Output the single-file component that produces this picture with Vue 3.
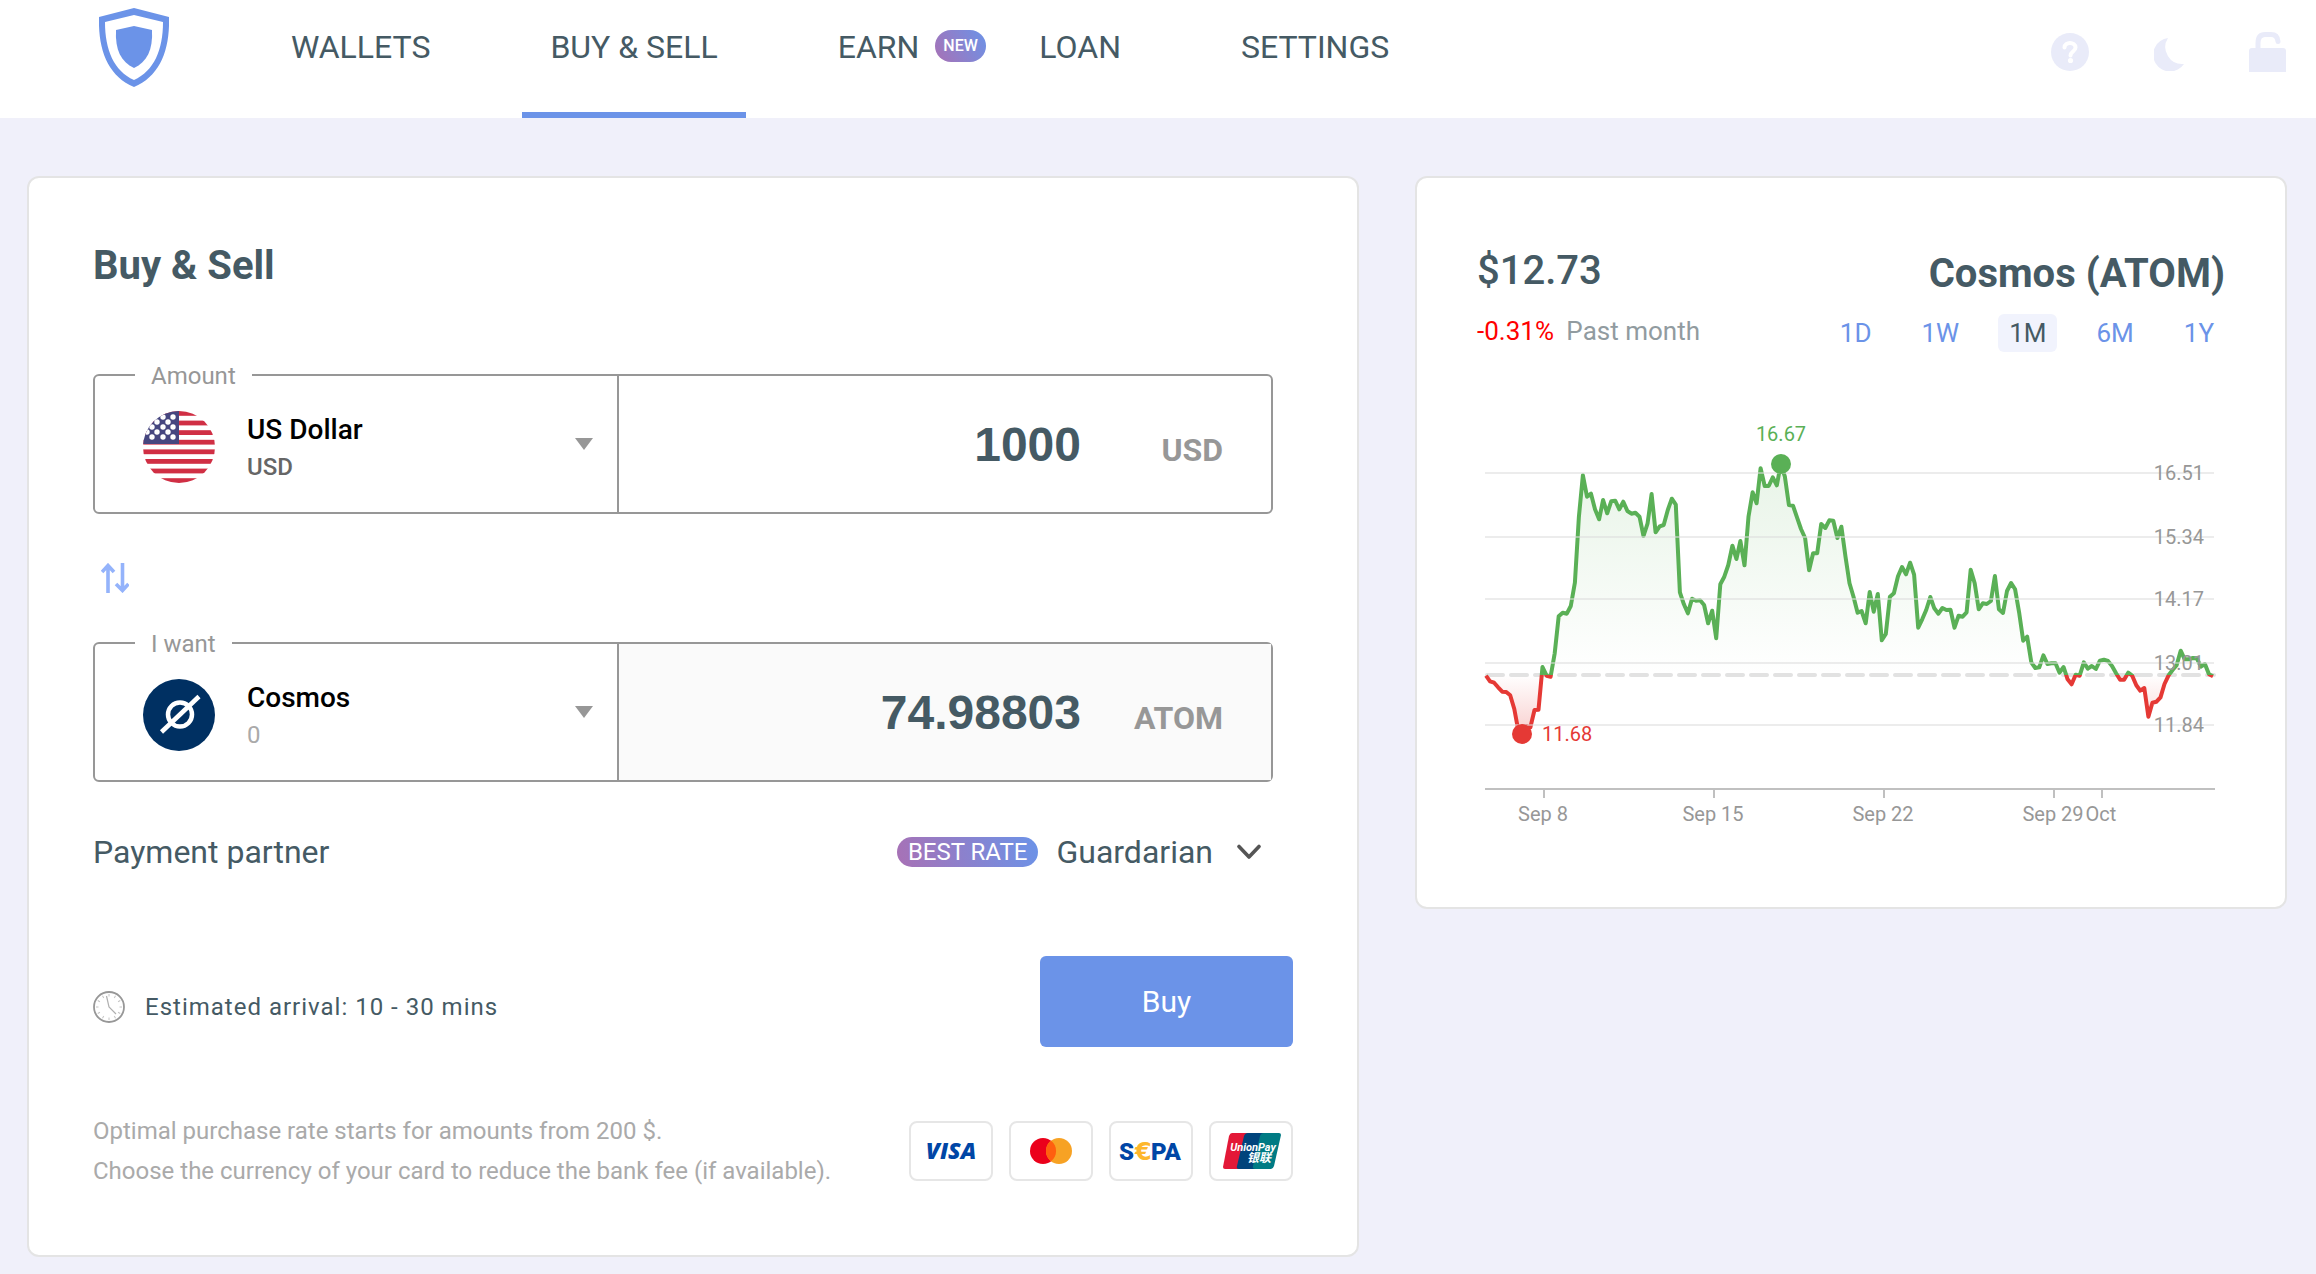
<template>
  <div class="page">
    <header class="topbar">
      <a class="logo" href="#" aria-label="Home">
        <svg width="70" height="79" viewBox="0 0 70 79">
          <path
            fill="#6b93e8"
            fill-rule="evenodd"
            d="M35 0 L70 9 C71 42 61 68 35 79 C9 68 -1 42 0 9 Z M35 7 L6 14 C6 42 15 63 35 72 C55 63 64 42 64 14 Z"
          />
          <path fill="#6b93e8" d="M35 18 L53 22 C54 42 48 54 35 60 C22 54 16 42 17 22 Z" />
        </svg>
      </a>
      <nav class="nav">
        <a
          v-for="item in menu"
          :key="item.label"
          href="#"
          class="nav-item"
          :class="{ active: item.active }"
        >
          {{ item.label }}
          <span v-if="item.badge" class="nav-badge">{{ item.badge }}</span>
        </a>
      </nav>
      <div class="tools">
        <button aria-label="Help">
          <svg width="38" height="38" viewBox="0 0 38 38">
            <circle cx="19" cy="19" r="19" fill="#e9ebf9" />
            <path
              d="M13.5 14.5 C13.5 8.500 24.500 8.500 24.500 14.500 C24.500 18.500 19.500 18.500 19.500 22.500"
              fill="none"
              stroke="#fff"
              stroke-width="4"
              stroke-linecap="round"
            />
            <circle cx="19.500" cy="27.500" r="2.600" fill="#fff" />
          </svg>
        </button>
        <button aria-label="Dark mode">
          <svg width="30" height="38" viewBox="0 0 30 38">
            <path
              fill="#e9ebf9"
              d="M14 5 A17 17 0 0 0 30 31 A16.800 16.800 0 1 1 14 5 Z"
            />
          </svg>
        </button>
        <button aria-label="Lock">
          <svg width="37" height="40" viewBox="0 0 37 40">
            <path
              d="M9 20 V11 Q9 2.500 16 2.500 H22 Q28.500 2.500 29 9.500"
              fill="none"
              stroke="#e9ebf9"
              stroke-width="5"
              stroke-linecap="round"
            />
            <path fill="#e9ebf9" d="M0 19 Q0 16 3 16 H34 Q37 16 37 19 V40 H0 Z" />
          </svg>
        </button>
      </div>
    </header>

    <main class="content">
      <section class="card trade">
        <h1>Buy &amp; Sell</h1>

        <div class="field">
          <label for="amount">Amount</label>
          <button class="picker">
            <svg class="coin" width="72" height="72" viewBox="0 0 72 72">
              <clipPath id="flag-clip"><circle cx="36" cy="36" r="36" /></clipPath>
              <g clip-path="url(#flag-clip)">
                <rect width="72" height="72" fill="#fff" />
                <rect
                  v-for="n in 8"
                  :key="n"
                  :y="(n - 1) * 9.6"
                  width="72"
                  height="4.8"
                  fill="#d02f44"
                />
                <rect width="36" height="33" fill="#46467f" />
                <circle
                  v-for="(star, i) in stars"
                  :key="i"
                  :cx="star[0]"
                  :cy="star[1]"
                  r="2.700"
                  fill="#fff"
                />
              </g>
            </svg>
            <span class="coin-text">
              <span class="coin-name">US Dollar</span>
              <span class="coin-sub code">USD</span>
            </span>
            <svg class="caret" width="18" height="12" viewBox="0 0 18 12">
              <path d="M0 0 H18 L9 12 Z" fill="#979797" />
            </svg>
          </button>
          <div class="value">
            <input id="amount" v-model="amount" type="text" />
            <span class="unit">USD</span>
          </div>
        </div>

        <button class="swap" aria-label="Swap currencies">
          <svg width="28" height="30" viewBox="0 0 28 30">
            <path
              d="M7 30 V3 M1 9 L7 2.500 L13 9 M21.500 0 V27 M15 21 L21.500 27.500 L27.500 21"
              fill="none"
              stroke="#94b3fb"
              stroke-width="3.600"
            />
          </svg>
        </button>

        <div class="field">
          <label for="receive">I want</label>
          <button class="picker">
            <svg class="coin" width="72" height="72" viewBox="0 0 72 72">
              <circle cx="36" cy="36" r="36" fill="#003062" />
              <circle cx="37" cy="35.500" r="12" fill="none" stroke="#fff" stroke-width="4.500" />
              <path d="M18.500 53 L56 17.500" stroke="#fff" stroke-width="4.500" />
            </svg>
            <span class="coin-text">
              <span class="coin-name">Cosmos</span>
              <span class="coin-sub">0</span>
            </span>
            <svg class="caret" width="18" height="12" viewBox="0 0 18 12">
              <path d="M0 0 H18 L9 12 Z" fill="#979797" />
            </svg>
          </button>
          <div class="value muted">
            <input id="receive" type="text" value="74.98803" readonly />
            <span class="unit">ATOM</span>
          </div>
        </div>

        <div class="partner">
          <span>Payment partner</span>
          <button class="partner-select">
            <span class="rate">BEST RATE</span>
            Guardarian
            <svg width="24" height="16" viewBox="0 0 24 16">
              <path
                d="M2 2.500 L12 13 L22 2.500"
                fill="none"
                stroke="#555"
                stroke-width="3.600"
                stroke-linecap="round"
                stroke-linejoin="round"
              />
            </svg>
          </button>
        </div>

        <div class="action">
          <p class="arrival">
            <svg width="32" height="32" viewBox="0 0 32 32">
              <circle cx="16" cy="16" r="15" fill="none" stroke="#979797" stroke-width="1.800" />
              <path
                v-for="n in 12"
                :key="n"
                d="M16 3 V5.500"
                stroke="#c4c4c4"
                :transform="`rotate(${n * 30} 16 16)`"
              />
              <path d="M13.500 5 L16 16 L23 23" fill="none" stroke="#b0b0b0" stroke-width="1.200" />
            </svg>
            Estimated arrival: 10 - 30 mins
          </p>
          <button class="buy">Buy</button>
        </div>

        <div class="footer">
          <p class="note">
            Optimal purchase rate starts for amounts from 200 $.<br />
            Choose the currency of your card to reduce the bank fee (if available).
          </p>
          <ul class="methods">
            <li>
              <svg width="80" height="56" viewBox="0 0 80 56">
                <text class="visa" x="40" y="36" text-anchor="middle">VISA</text>
              </svg>
            </li>
            <li>
              <svg width="80" height="56" viewBox="0 0 80 56" role="img" aria-label="Mastercard">
                <circle cx="32" cy="28" r="13" fill="#eb001b" />
                <circle cx="48" cy="28" r="13" fill="#f79e1b" fill-opacity="0.96" />
                <path d="M40 17.700 A13 13 0 0 1 40 38.300 A13 13 0 0 1 40 17.700 Z" fill="#ff5f0f" />
              </svg>
            </li>
            <li>
              <svg width="80" height="56" viewBox="0 0 80 56">
                <text class="sepa" y="37">
                  <tspan x="8">S</tspan><tspan class="euro" x="24">€</tspan><tspan x="40">PA</tspan>
                </text>
              </svg>
            </li>
            <li>
              <svg width="80" height="56" viewBox="0 0 80 56">
                <path d="M21 10 H40 L31 46 H14 Q12 46 12 44 L18 13 Q19 10 21 10 Z" fill="#e31837" />
                <path d="M37 10 H56 L48 46 H28 Q25 46 26 43 L33 13 Q34 10 37 10 Z" fill="#00447c" />
                <path
                  d="M53 10 H68 Q70 10 70 12 L63 43 Q62 46 60 46 H44 Q41 46 42 43 L49 13 Q50 10 53 10 Z"
                  fill="#007b84"
                />
                <text class="union" x="42" y="28" text-anchor="middle">UnionPay</text>
                <text class="union-cn" x="48" y="39" text-anchor="middle">银联</text>
              </svg>
            </li>
          </ul>
        </div>
      </section>

      <section class="card rates">
        <div class="rates-head">
          <div>
            <p class="price">$12.73</p>
            <p class="change"><span class="down">-0.31%</span> Past month</p>
          </div>
          <div class="rates-side">
            <h2>Cosmos (ATOM)</h2>
            <div class="ranges">
              <button
                v-for="r in ranges"
                :key="r"
                :class="{ selected: r === range }"
                @click="range = r"
              >
                {{ r }}
              </button>
            </div>
          </div>
        </div>

        <svg class="chart" viewBox="0 0 748 420">
          <defs>
            <linearGradient id="fill-up" gradientUnits="userSpaceOnUse" x1="0" x2="0" y1="44" :y2="base">
              <stop offset="0" stop-color="#5ab056" stop-opacity="0.14" />
              <stop offset="1" stop-color="#5ab056" stop-opacity="0" />
            </linearGradient>
            <linearGradient id="fill-down" gradientUnits="userSpaceOnUse" x1="0" x2="0" :y1="base" y2="314">
              <stop offset="0" stop-color="#e53935" stop-opacity="0" />
              <stop offset="1" stop-color="#e53935" stop-opacity="0.24" />
            </linearGradient>
            <clipPath id="above"><rect width="748" :height="base" /></clipPath>
            <clipPath id="below"><rect :y="base" width="748" height="120" /></clipPath>
          </defs>
          <path :d="area" fill="url(#fill-up)" clip-path="url(#above)" />
          <path :d="area" fill="url(#fill-down)" clip-path="url(#below)" />
          <path
            :d="`M10 ${base} H737`"
            stroke="#e2e2e2"
            stroke-width="4"
            stroke-linecap="round"
            stroke-dasharray="16 8"
          />
          <path class="line" :d="line" stroke="#5ab056" clip-path="url(#above)" />
          <path class="line" :d="line" stroke="#e53935" clip-path="url(#below)" />
          <g v-for="tick in yTicks" :key="tick.label">
            <path :d="`M8 ${tick.y} H737`" stroke="#dcdcdc" stroke-opacity="0.550" stroke-width="2" />
            <text class="tick" x="727" :y="tick.y + 7" text-anchor="end">{{ tick.label }}</text>
          </g>
          <circle cx="304" cy="44" r="10" fill="#5ab056" />
          <text class="high" x="304" y="21" text-anchor="middle">16.67</text>
          <circle cx="45" cy="314" r="10" fill="#e53935" />
          <text class="low" x="65" y="321">11.68</text>
          <path d="M8 369 H738" stroke="#c0c0c0" stroke-width="2" />
          <g v-for="tick in xTicks" :key="tick.label">
            <path :d="`M${tick.x} 369 V378`" stroke="#c0c0c0" stroke-width="2" />
            <text class="tick" :x="tick.x - 1" y="401" text-anchor="middle">{{ tick.label }}</text>
          </g>
        </svg>
      </section>
    </main>
  </div>
</template>

<script setup>
import { computed, ref } from "vue";

const menu = [
  { label: "WALLETS" },
  { label: "BUY & SELL", active: true },
  { label: "EARN", badge: "NEW" },
  { label: "LOAN" },
  { label: "SETTINGS" },
];

const amount = ref("1000");
const ranges = ["1D", "1W", "1M", "6M", "1Y"];
const range = ref("1M");

const stars = [
  [30, 6], [20, 6],
  [25, 11], [14, 11],
  [30, 16], [20, 16], [9, 16],
  [25, 21], [14, 21], [4, 21],
  [30, 26], [20, 26], [9, 26],
];

// chart samples, three units per chart pixel, measured from the top
const samples = [
  797, 814, 818, 832, 845, 846, 856, 897, 962, 972, 948, 952, 900, 899, 771, 797, 800, 730, 619,
  608, 611, 588, 518, 320, 196, 260, 251, 298, 328, 270, 310, 274, 272, 298, 275, 303, 311, 308,
  320, 378, 340, 252, 367, 349, 345, 300, 266, 284, 547, 583, 610, 566, 572, 571, 585, 640, 602,
  685, 523, 500, 465, 407, 447, 393, 466, 320, 247, 280, 175, 228, 228, 202, 226, 162, 200, 285,
  287, 322, 357, 384, 481, 430, 430, 342, 354, 331, 332, 384, 350, 440, 520, 560, 608, 603, 640,
  546, 605, 552, 691, 672, 560, 550, 499, 471, 493, 458, 494, 653, 628, 600, 561, 595, 611, 594,
  600, 599, 653, 617, 620, 607, 479, 520, 598, 580, 582, 573, 498, 598, 609, 543, 519, 538, 607,
  692, 680, 757, 774, 772, 736, 762, 760, 760, 788, 771, 808, 823, 794, 797, 757, 776, 768, 777,
  752, 749, 753, 768, 790, 809, 809, 788, 797, 826, 842, 834, 920, 878, 875, 862, 822, 796, 780,
  766, 722, 748, 748, 744, 745, 770, 762, 793, 799,
];

const base = 255;
const left = 9;
const right = 736;

const yTicks = [
  { label: "16.51", y: 53 },
  { label: "15.34", y: 117 },
  { label: "14.17", y: 179 },
  { label: "13.01", y: 243 },
  { label: "11.84", y: 305 },
];

const xTicks = [
  { label: "Sep 8", x: 67 },
  { label: "Sep 15", x: 237 },
  { label: "Sep 22", x: 407 },
  { label: "Sep 29", x: 577 },
  { label: "Oct", x: 625 },
];

const line = computed(() => {
  const step = (right - left) / (samples.length - 1);
  const points = samples.map((s, i) => `${(left + i * step).toFixed(1)} ${(s / 3 - 10).toFixed(1)}`);
  return `M${points.join(" L")}`;
});

const area = computed(() => `${line.value} L${right} ${base} L${left} ${base} Z`);
</script>

<style>
body {
  background: #f0f0fa;
}
</style>

<style scoped>
.page {
  font-family: Roboto, "Noto Sans CJK SC", sans-serif;
  color: #455a64;
  min-height: 100vh;
}

.page *,
.page *::before {
  box-sizing: border-box;
}

button {
  font: inherit;
  color: inherit;
  background: none;
  border: 0;
  padding: 0;
  cursor: pointer;
}

svg {
  display: block;
  flex: none;
}

p,
h1,
h2 {
  margin: 0;
}

.topbar {
  display: flex;
  align-items: flex-start;
  height: 118px;
  padding: 0 30px 0 99px;
  background: #fff;
}

.logo {
  padding-top: 8px;
  margin-right: 94px;
}

.nav {
  display: flex;
  gap: 64px;
}

.nav-item {
  position: relative;
  height: 118px;
  padding: 0 28px;
  font-size: 32px;
  line-height: 94px;
  color: inherit;
  text-decoration: none;
  white-space: nowrap;
}

.nav-item.active {
  border-bottom: 6px solid #6b93e8;
}

.nav-badge {
  position: absolute;
  top: 30px;
  left: calc(100% - 12px);
  padding: 0 8px;
  border-radius: 16px;
  background: linear-gradient(60deg, #a871b5, #6b93e8);
  color: #fff;
  font-size: 16px;
  font-weight: 500;
  line-height: 32px;
}

.tools {
  display: flex;
  gap: 65px;
  margin-left: auto;
  padding-top: 32px;
}

.content {
  display: grid;
  grid-template-columns: 1332fr 872fr;
  align-items: start;
  gap: 56px;
  padding: 58px 29px 16px 27px;
}

.card {
  background: #fff;
  border: 2px solid #e4e4e4;
  border-radius: 12px;
}

.trade {
  padding: 64px;
}

h1,
h2,
.price {
  font-size: 40px;
  font-weight: 700;
  line-height: 48px;
}

h1 {
  margin-bottom: 84px;
}

.field {
  position: relative;
  display: grid;
  grid-template-columns: minmax(0, 524fr) minmax(0, 652fr);
  height: 140px;
  margin-right: 20px;
  border: 2px solid #979797;
  border-radius: 6px;
}

.field label {
  position: absolute;
  top: -14px;
  left: 40px;
  padding: 0 16px;
  background: #fff;
  color: #979797;
  font-size: 24px;
  line-height: 28px;
}

.picker {
  display: flex;
  align-items: center;
  gap: 32px;
  padding: 6px 24px 0 48px;
  border-right: 2px solid #979797;
  text-align: left;
}

.coin-text {
  display: flex;
  flex-direction: column;
  flex: 1;
  padding-top: 4px;
}

.coin-name {
  color: #000;
  font-size: 28px;
  font-weight: 500;
  line-height: 36px;
}

.coin-sub {
  color: #aaa;
  font-size: 24px;
  line-height: 38px;
}

.coin-sub.code {
  color: #666;
  font-weight: 500;
}

.caret {
  margin-bottom: 6px;
}

.value {
  display: flex;
  align-items: baseline;
  padding-right: 48px;
}

.value.muted {
  background: #fafafa;
}

.value input {
  flex: 1;
  min-width: 0;
  height: 136px;
  padding: 0;
  border: 0;
  outline: 0;
  background: none;
  color: inherit;
  font-family: "Liberation Sans", Arial, sans-serif;
  font-size: 48px;
  font-weight: 700;
  text-align: right;
}

.unit {
  width: 142px;
  color: #979797;
  font-size: 32px;
  font-weight: 700;
  text-align: right;
}

.swap {
  display: flex;
  align-items: center;
  height: 128px;
  padding-left: 8px;
}

.partner {
  display: flex;
  justify-content: space-between;
  margin: 50px 32px 84px 0;
  font-size: 32px;
  line-height: 40px;
}

.partner-select {
  display: flex;
  align-items: center;
  gap: 18px;
}

.partner-select svg {
  margin-left: 6px;
}

.rate {
  padding: 0 11px;
  border-radius: 15px;
  background: linear-gradient(75deg, #a871b5, #6b93e8);
  color: #fff;
  font-size: 24px;
  line-height: 30px;
}

.action {
  display: flex;
  align-items: center;
  justify-content: space-between;
  margin-bottom: 64px;
}

.arrival {
  display: flex;
  align-items: center;
  gap: 20px;
  padding-top: 11px;
  font-size: 24px;
  letter-spacing: 1px;
}

.buy {
  width: 253px;
  height: 91px;
  border-radius: 6px;
  background: #6b93e8;
  color: #fff;
  font-size: 30px;
}

.footer {
  display: flex;
  align-items: center;
  justify-content: space-between;
}

.note {
  color: #aaa;
  font-size: 24px;
  line-height: 40px;
}

.methods {
  display: flex;
  gap: 16px;
  margin: 0;
  padding: 0;
  list-style: none;
}

.methods li {
  border: 2px solid #e6e6e6;
  border-radius: 8px;
}

.visa {
  fill: #0046a6;
  font-family: "Open Sans", sans-serif;
  font-size: 23px;
  font-style: italic;
  font-weight: 800;
}

.sepa {
  fill: #0046a6;
  font-size: 24px;
  font-weight: 900;
}

.euro {
  fill: #fdb72c;
  font-family: "DejaVu Sans", sans-serif;
  font-weight: 700;
}

.union,
.union-cn {
  fill: #fff;
  font-size: 11px;
  font-style: italic;
  font-weight: 700;
}

.union-cn {
  font-size: 12px;
}

.rates {
  padding: 69px 60px 67px;
}

.rates-head {
  display: flex;
  justify-content: space-between;
  margin-bottom: 68px;
}

.price {
  margin-bottom: 17px;
  font-weight: 500;
}

.change {
  color: #919ba0;
  font-size: 26px;
  line-height: 38px;
}

.down {
  margin-right: 6px;
  color: #f00;
}

.rates-side {
  padding-top: 3px;
}

h2 {
  margin-bottom: 16px;
  text-align: right;
}

.ranges {
  display: flex;
  justify-content: flex-end;
  gap: 28px;
}

.ranges button {
  padding: 0 11px;
  border-radius: 6px;
  color: #6b93e8;
  font-size: 26px;
  line-height: 38px;
}

.ranges .selected {
  background: #f1f3fd;
  color: #455a64;
}

.chart {
  width: 100%;
  height: auto;
}

.line {
  fill: none;
  stroke-width: 4;
  stroke-linejoin: round;
}

.tick,
.high,
.low {
  fill: #979797;
  font-size: 20px;
}

.high {
  fill: #5ab056;
}

.low {
  fill: #e53935;
}
</style>
